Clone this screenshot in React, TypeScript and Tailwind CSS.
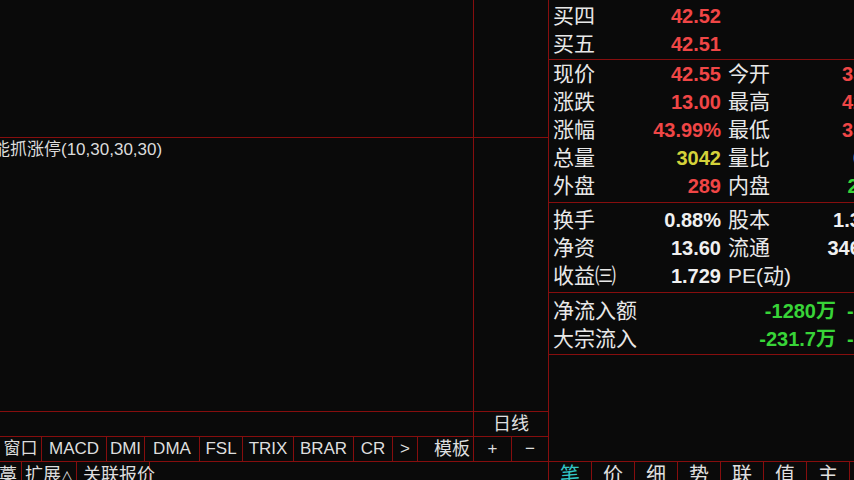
import type { ReactNode } from "react";

const RED = "text-[#f04646]";
const GREEN = "text-[#38d438]";
const YELLOW = "text-[#d4d23a]";
const WHITE = "text-[#f0f0f0]";

type Cell = { label: ReactNode; value?: string; color?: string };

const QuoteRow = ({ left, right }: { left: Cell; right?: Cell }) => (
  <div className="flex h-[28px] items-center leading-[28px]">
    <div className="w-[172px] flex justify-between pl-[4px]">
      <span className="text-[21px] text-[#e8e8e8]">{left.label}</span>
      <span className={`text-[20px] font-bold ${left.color ?? WHITE}`}>{left.value}</span>
    </div>
    {right && (
      <div className="w-[171px] flex justify-between pl-[7px]">
        <span className="text-[21px] text-[#e8e8e8]">{right.label}</span>
        <span className={`text-[20px] font-bold ${right.color ?? WHITE}`}>{right.value}</span>
      </div>
    )}
  </div>
);

const FlowRow = ({ label, value, extra }: { label: string; value: string; extra: string }) => (
  <div className="flex h-[28px] items-center leading-[28px]">
    <div className="w-[287px] flex justify-between pl-[4px]">
      <span className="text-[21px] text-[#e8e8e8]">{label}</span>
      <span className={`text-[20px] font-bold ${GREEN}`}>{value}</span>
    </div>
    <span className={`pl-[11px] text-[20px] font-bold ${GREEN}`}>{extra}</span>
  </div>
);

const indicatorTabs = [
  { name: "窗口", w: "w-[42px]" },
  { name: "MACD", w: "w-[65px]" },
  { name: "DMI", w: "w-[38px]" },
  { name: "DMA", w: "w-[55px]" },
  { name: "FSL", w: "w-[43px]" },
  { name: "TRIX", w: "w-[51px]" },
  { name: "BRAR", w: "w-[60px]" },
  { name: "CR", w: "w-[39px]" },
  { name: ">", w: "w-[25px]" },
];

const sideTabs = ["笔", "价", "细", "势", "联", "值", "主", "财"];

const LeftPane = () => (
  <div className="w-[548px] shrink-0 flex flex-col">
    {/* chart area */}
    <div className="h-[412px] flex border-b border-[#860e0e]">
      <div className="w-[473px] flex flex-col">
        <div className="h-[138px] border-b border-[#860e0e]" />
        <div className="flex-1 pt-[1px]">
          <div className="-ml-[7px] text-[17px] leading-[22px] text-[#dcdcdc] whitespace-nowrap">
            能抓涨停(10,30,30,30)
          </div>
        </div>
      </div>
      <div className="flex-1 flex flex-col border-l border-[#860e0e]">
        <div className="h-[138px] border-b border-[#860e0e]" />
        <div className="flex-1" />
      </div>
    </div>

    {/* period row */}
    <div className="h-[25px] flex border-b border-[#860e0e]">
      <div className="w-[473px]" />
      <div className="flex-1 border-l border-[#860e0e] flex items-center justify-center text-[18px] text-[#e0e0e0]">
        日线
      </div>
    </div>

    {/* indicator tabs */}
    <div className="h-[25px] flex border-b border-[#860e0e] text-[17px] text-[#dedede] leading-[24px]">
      {indicatorTabs.map((t) => (
        <div key={t.name} className={`${t.w} shrink-0 border-r border-[#860e0e] flex items-center justify-center`}>
          {t.name}
        </div>
      ))}
      <div className="w-[56px] shrink-0 border-r border-[#860e0e] flex items-center justify-end pr-[3px] text-[18px]">
        模板
      </div>
      <div className="w-[38px] shrink-0 border-r border-[#860e0e] flex items-center justify-center">+</div>
      <div className="flex-1 flex items-center justify-center">−</div>
    </div>

    {/* bottom strip */}
    <div className="flex-1 flex text-[18px] text-[#dedede] leading-[26px] overflow-hidden">
      <div className="w-[22px] shrink-0 border-r border-[#860e0e] flex justify-end overflow-hidden">
        <span className="pr-[4px]">藁</span>
      </div>
      <div className="w-[55px] shrink-0 border-r border-[#860e0e] pl-[3px] whitespace-nowrap">
        扩展<span className="text-[12px]">∧</span>
      </div>
      <div className="w-[73px] shrink-0 border-r border-[#860e0e] pl-[6px] whitespace-nowrap">关联报价</div>
      <div className="flex-1" />
    </div>
  </div>
);

const QuotePanel = () => (
  <div className="flex-1 min-w-0 border-l border-[#860e0e] flex flex-col overflow-hidden">
    <div className="w-[380px] flex flex-col flex-1">
      <div className="pt-[2px] pb-[1px] border-b border-[#860e0e]">
        <QuoteRow left={{ label: "买四", value: "42.52", color: RED }} />
        <QuoteRow left={{ label: "买五", value: "42.51", color: RED }} />
      </div>
      <div className="pb-[2px] border-b border-[#860e0e]">
        <QuoteRow left={{ label: "现价", value: "42.55", color: RED }} right={{ label: "今开", value: "35.46", color: RED }} />
        <QuoteRow left={{ label: "涨跌", value: "13.00", color: RED }} right={{ label: "最高", value: "42.55", color: RED }} />
        <QuoteRow left={{ label: "涨幅", value: "43.99%", color: RED }} right={{ label: "最低", value: "35.20", color: RED }} />
        <QuoteRow left={{ label: "总量", value: "3042", color: YELLOW }} right={{ label: "量比", value: "0.31", color: WHITE }} />
        <QuoteRow left={{ label: "外盘", value: "289", color: RED }} right={{ label: "内盘", value: "2753", color: GREEN }} />
      </div>
      <div className="pt-[3px] pb-[2px] border-b border-[#860e0e]">
        <QuoteRow left={{ label: "换手", value: "0.88%" }} right={{ label: "股本", value: "1.32亿" }} />
        <QuoteRow left={{ label: "净资", value: "13.60" }} right={{ label: "流通", value: "3468万" }} />
        <QuoteRow left={{ label: "收益㈢", value: "1.729" }} right={{ label: "PE(动)", value: "" }} />
      </div>
      <div className="pt-[4px] pb-[1px] border-b border-[#860e0e]">
        <FlowRow label="净流入额" value="-1280万" extra="-0.52%" />
        <FlowRow label="大宗流入" value="-231.7万" extra="-0.09%" />
      </div>
      <div className="flex-1 border-b border-[#860e0e]" />
      <div className="h-[18px] flex text-[20px] leading-[26px] text-[#e0e0e0] overflow-hidden">
        {sideTabs.map((t, i) => (
          <div
            key={t}
            className={`w-[43px] shrink-0 border-r border-[#860e0e] text-center ${i === 0 ? "text-[#33c6c6]" : ""}`}
          >
            {t}
          </div>
        ))}
      </div>
    </div>
  </div>
);

export default function App() {
  return (
    <div className="w-[854px] h-[480px] overflow-hidden bg-[#0a0a0a] flex font-['Liberation_Sans','Noto_Sans_CJK_SC',sans-serif]">
      <LeftPane />
      <QuotePanel />
    </div>
  );
}
